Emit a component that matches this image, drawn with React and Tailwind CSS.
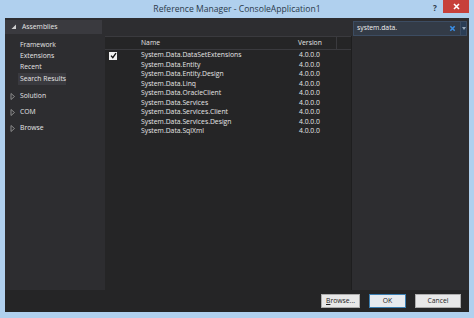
import React from "react";

const rows = [
  "System.Data.DataSetExtensions",
  "System.Data.Entity",
  "System.Data.Entity.Design",
  "System.Data.Linq",
  "System.Data.OracleClient",
  "System.Data.Services",
  "System.Data.Services.Client",
  "System.Data.Services.Design",
  "System.Data.SqlXml",
];

function Tri({ open }) {
  return open ? (
    <svg width="6" height="6" viewBox="0 0 6 6" className="shrink-0">
      <polygon points="5,0.5 5,5 0.5,5" fill="#d0d0d0" />
    </svg>
  ) : (
    <svg width="6" height="7" viewBox="0 0 6 7" className="shrink-0">
      <polygon points="1,0.5 4.5,3.5 1,6.5" fill="none" stroke="#8a8a8a" strokeWidth="1" />
    </svg>
  );
}

export default function App() {
  return (
    <div
      className="w-[474px] h-[318px] bg-[#b0d0ee] flex flex-col overflow-hidden"
      style={{ fontFamily: '"Open Sans", "Noto Sans", sans-serif' }}
    >
      {/* title bar */}
      <div className="h-[18px] relative flex items-center justify-center shrink-0">
        <span className="text-[8.6px] text-[#2b3a4a] leading-none">Reference Manager - ConsoleApplication1</span>
        <span className="absolute left-[433px] top-[4px] text-[8px] font-bold text-[#2b3a4a] leading-none">?</span>
        <div className="absolute right-[5px] top-0 w-[26px] h-[13px] bg-[#c7403a] flex items-center justify-center">
          <svg width="7" height="7" viewBox="0 0 7 7">
            <path d="M1 1 L6 6 M6 1 L1 6" stroke="white" strokeWidth="1.6" />
          </svg>
        </div>
      </div>

      {/* body */}
      <div className="flex-1 mx-[5px] mb-[6px] bg-[#2d2d30] flex flex-col text-[#e6e6e6]">
        <div className="flex flex-1 min-h-0">
          {/* left */}
          <div className="w-[100px] shrink-0 pt-[2px] text-[6.8px] leading-none">
            <div className="h-[14px] w-[97px] bg-[#3a3a3f] flex items-center gap-[5px] pl-[6px]">
              <Tri open />
              <span>Assemblies</span>
            </div>
            <div className="flex flex-col pl-[13px] pt-[6px]">
              <div className="h-[11px] flex items-center pl-[2px]">Framework</div>
              <div className="h-[11px] flex items-center pl-[2px]">Extensions</div>
              <div className="h-[11px] flex items-center pl-[2px]">Recent</div>
              <div className="h-[12px] w-[48px] flex items-center pl-[2px] bg-[#3a3a3f] whitespace-nowrap">Search Results</div>
            </div>
            <div className="flex flex-col pl-[5px] pt-[3px]">
              <div className="h-[16px] flex items-center gap-[4px]"><Tri /><span>Solution</span></div>
              <div className="h-[16px] flex items-center gap-[4px]"><Tri /><span>COM</span></div>
              <div className="h-[16px] flex items-center gap-[4px]"><Tri /><span>Browse</span></div>
            </div>
          </div>

          {/* center list */}
          <div className="w-[247px] shrink-0 mt-[18px] bg-[#252526] border-r border-[#1e1e1f] text-[6.8px] leading-none">
            <div className="h-[14px] flex items-center border-b border-t border-[#3a3a3e]">
              <div className="w-[36px]" />
              <div className="w-[157px]">Name</div>
              <div className="w-[39px] h-full flex items-center border-r border-[#3a3a3e]">Version</div>
            </div>
            <div className="pt-[1px]">
              {rows.map((r, i) => (
                <div key={r} className="h-[9.5px] flex items-center whitespace-nowrap">
                  <div className="w-[36px] pl-[4px]">
                    {i === 0 ? (
                      <div className="w-[8px] h-[8px] bg-[#f0f0f0] flex items-center justify-center">
                        <svg width="7" height="7" viewBox="0 0 7 7">
                          <path d="M1 3.6 L2.8 5.6 L6 1.2" stroke="#111" strokeWidth="1.4" fill="none" />
                        </svg>
                      </div>
                    ) : null}
                  </div>
                  <div className="w-[158px]">{r}</div>
                  <div>4.0.0.0</div>
                </div>
              ))}
            </div>
          </div>

          {/* right */}
          <div className="flex-1 pt-[3px] pl-[1px] pr-[2px]">
            <div className="h-[15px] bg-[#333b47] border border-[#3c4c62] flex items-center pl-[3px] text-[6.8px] leading-none text-[#f0f0f0]">
              <span className="flex-1">system.data.</span>
              <svg width="7" height="7" viewBox="0 0 8 8" className="mr-[4px]">
                <path d="M1.5 1.5 L6.5 6.5 M6.5 1.5 L1.5 6.5" stroke="#3a8ee6" strokeWidth="1.8" />
              </svg>
              <div className="w-[6px] h-full bg-[#2a3d55] border-l border-[#3c4c62] flex items-center justify-center">
                <svg width="4" height="3" viewBox="0 0 4 3"><polygon points="0,0 4,0 2,3" fill="#9ab" /></svg>
              </div>
            </div>
          </div>
        </div>

        {/* bottom bar */}
        <div className="h-[22px] shrink-0 bg-[#252526] flex items-center justify-end gap-[9px] pr-[8px] text-[6.8px] leading-none text-[#1e1e1e]">
          <div className="w-[39px] h-[14px] bg-[#e8e8e8] border border-[#adadad] flex items-center justify-center"><span><u>B</u>rowse...</span></div>
          <div className="w-[37px] h-[14px] bg-[#e6eaee] border border-[#3c7fb1] flex items-center justify-center">OK</div>
          <div className="w-[46px] h-[14px] bg-[#e8e8e8] border border-[#adadad] flex items-center justify-center">Cancel</div>
        </div>
      </div>
    </div>
  );
}
